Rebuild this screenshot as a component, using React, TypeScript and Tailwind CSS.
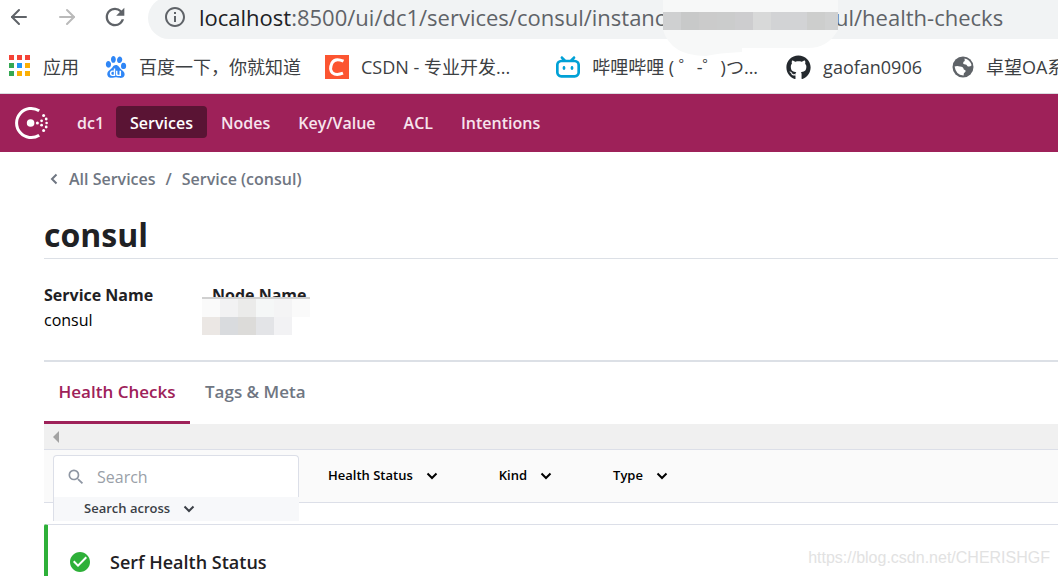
import { ArrowLeft, ArrowRight } from 'lucide-react'
import { FaGithub } from 'react-icons/fa'
import { MdCheckCircle, MdOutlineInfo, MdRefresh, MdSearch } from 'react-icons/md'
import { SiBaidu, SiBilibili } from 'react-icons/si'

const appColors = [
  '#f44336', '#f44336', '#f44336',
  '#34a853', '#2196f3', '#fbb004',
  '#34a853', '#fbb004', '#fbb004',
]

const urlMask = ['#cfd0d1', '#c8c9c9', '#cbcbcb', '#cbcccc', '#cdcdcf', '#d8d9d9', '#d2d3d5', '#d2d3d5', '#cdcecd', '#d0d1d1']

const nodeMask = [
  ['#fafafa', '#f2f2f3', '#ebebea', '#f5f7f7', '#f4f4f5', '#fafafa'],
  ['#ebe7e4', '#d9dbde', '#dcdbd9', '#e3e4e7', '#f2f2f4', '#ffffff'],
]

const navItems = ['Services', 'Nodes', 'Key/Value', 'ACL', 'Intentions']

function Chevron() {
  return (
    <svg viewBox="0 0 12 8" className="w-3 h-2 shrink-0" fill="none" stroke="currentColor" strokeWidth="2">
      <path d="M1.5 1.5 6 6l4.5-4.5" />
    </svg>
  )
}

function ConsulLogo() {
  return (
    <svg viewBox="0 0 34 34" className="w-[34px] h-[34px]" fill="white">
      <path d="M24.2 29.2A14.6 14.6 0 1 1 24.2 4.8" fill="none" stroke="white" strokeWidth="3" />
      <circle cx="15.6" cy="17" r="3.8" />
      <circle cx="22.4" cy="17" r="1.5" />
      <circle cx="26.6" cy="14.8" r="1.4" />
      <circle cx="26.6" cy="19.2" r="1.4" />
      <circle cx="31.2" cy="13" r="1.4" />
      <circle cx="31.6" cy="17" r="1.3" />
      <circle cx="31.2" cy="21" r="1.4" />
      <circle cx="28.6" cy="9.4" r="1.5" />
      <circle cx="28.6" cy="24.6" r="1.5" />
    </svg>
  )
}

function Globe() {
  return (
    <svg viewBox="0 0 22 22" className="w-[22px] h-[22px] mr-3">
      <circle cx="11" cy="11" r="10.5" fill="#5f6368" />
      <path d="M12.5 2.4Q18 3.4 19.6 9.2Q18 11 15.5 10.2Q14.8 8 12 8.2Q10.2 7.4 11.6 5.8Q13.4 5 12.5 2.4Z" fill="white" />
      <path d="M2.6 10.6Q5.2 9.4 8 10.6Q11.4 10.8 11.8 13.4Q14.6 14 13.2 16Q11.4 16.8 11.6 19.4Q4 19.6 2.6 10.6Z" fill="white" />
    </svg>
  )
}

function BrowserBar() {
  return (
    <div className="h-[39px] flex items-end pl-[7px] text-[#5f6368]">
      <div className="h-[42px] pb-0.5 flex items-center shrink-0">
        <button aria-label="Back" className="w-6"><ArrowLeft size={24} /></button>
        <button aria-label="Forward" className="w-6 ml-6 text-[#bababa]"><ArrowRight size={24} /></button>
        <button aria-label="Reload" className="ml-[22px]"><MdRefresh size={28} /></button>
      </div>
      <div className="relative h-[42px] flex-1 ml-[19px] pl-[15px] pb-0.5 flex items-center rounded-l-full bg-[#f1f3f4] text-[22px] whitespace-nowrap">
        <MdOutlineInfo size={24} className="shrink-0 mr-3" />
        <span className="w-[636px] shrink-0">
          <span className="text-[#202124]">localhost</span>:8500/ui/dc1/services/consul/instance
        </span>
        <span>ul/health-checks</span>
        <div className="absolute left-[515px] top-[3px] w-[175px]">
          <svg viewBox="0 0 175 56" className="block w-full">
            <path d="M0 30V0h175v30Q165 48 145 48H79V52Q55 53 43 56Q8 56 0 30Z" fill="#f7f8f8" />
          </svg>
          <div className="absolute top-3 left-0 w-full h-[18px] flex overflow-hidden">
            {urlMask.map((color, i) => (
              <span key={i} className="w-[18px] h-[18px] shrink-0" style={{ backgroundColor: color }} />
            ))}
          </div>
        </div>
      </div>
    </div>
  )
}

function Bookmarks() {
  return (
    <nav className="h-[55px] pt-0.5 flex items-center pl-[9px] border-b border-[#dadce0] text-lg text-[#3c4043] whitespace-nowrap overflow-hidden">
      <a href="#" className="flex items-center shrink-0">
        <span className="grid grid-cols-3 gap-[3px] mr-[13px] pb-1">
          {appColors.map((color, i) => (
            <span key={i} className="w-[5px] h-[5px]" style={{ backgroundColor: color }} />
          ))}
        </span>
        应用
      </a>
      <a href="#" className="flex items-center shrink-0 ml-[26px]">
        <SiBaidu size={22} className="text-[#2f86f6] mr-3" />
        百度一下，你就知道
      </a>
      <a href="#" className="flex items-center shrink-0 ml-6">
        <svg viewBox="0 0 24 24" className="w-6 h-6 mr-3">
          <path d="M0 0h24v24H0z" fill="#fc5531" />
          <path d="M18.5 6.2Q10 2.4 7 8Q4 14.5 7.5 17.8Q11 20.8 18 18.2" fill="none" stroke="white" strokeWidth="3" />
        </svg>
        CSDN - 专业开发...
      </a>
      <a href="#" className="flex items-center shrink-0 ml-[46px]">
        <SiBilibili size={24} className="text-[#00a1d6] mr-3" />
        哔哩哔哩 ( ゜-゜)つ...
      </a>
      <a href="#" className="flex items-center shrink-0 ml-7">
        <FaGithub size={25} className="text-[#24292e] mr-3" />
        gaofan0906
      </a>
      <a href="#" className="flex items-center shrink-0 ml-[30px]">
        <Globe />
        卓望OA系
      </a>
    </nav>
  )
}

function Mosaic() {
  return (
    <div className="absolute left-0 top-[14px] w-[108px] border-t-2 border-[#d0d0d0] bg-white">
      {nodeMask.map((row, r) => (
        <div key={r} className="flex">
          {row.map((color, i) => (
            <span key={i} className="w-[18px] h-[18px]" style={{ backgroundColor: color }} />
          ))}
        </div>
      ))}
    </div>
  )
}

function Filter({ label }: { label: string }) {
  return (
    <button className="flex items-center gap-[13px]">
      {label}
      <Chevron />
    </button>
  )
}

export default function App() {
  return (
    <div className="h-screen overflow-hidden relative bg-white text-black font-['Open_Sans','Noto_Sans_CJK_SC',sans-serif]">
      <BrowserBar />
      <Bookmarks />

      <header className="h-[58px] flex items-center pl-[15px] bg-[#9e2159] text-base font-semibold text-[#f7e4ed]">
        <ConsulLogo />
        <button className="ml-7">dc1</button>
        <nav className="flex items-center ml-3 pb-0.5">
          {navItems.map((item) => (
            <a
              key={item}
              href="#"
              className={
                item === 'Services'
                  ? 'h-8 px-[14px] pt-0.5 flex items-center rounded bg-[#5a1434] text-white'
                  : 'h-8 px-[14px] pt-0.5 flex items-center'
              }
            >
              {item}
            </a>
          ))}
        </nav>
      </header>

      <main className="pl-11">
        <nav className="h-[54px] flex items-center pl-1.5 text-base font-semibold text-[#6f7682]">
          <svg viewBox="0 0 8 12" className="w-2 h-3 mr-[11px]" fill="none" stroke="currentColor" strokeWidth="2">
            <path d="M6.5 1.5 2 6l4.5 4.5" />
          </svg>
          <a href="#">All Services</a>
          <span className="mx-2.5">/</span>
          <a href="#">Service (consul)</a>
        </nav>

        <h1 className="h-[53px] pt-1.5 border-b border-[#dce0e6] text-[32px] leading-[46px] font-bold text-[#1f2124]">consul</h1>

        <dl className="h-[103px] pt-6 flex border-b-2 border-[#dce0e6] text-base leading-[25px]">
          <div className="w-[158px]">
            <dt className="font-bold text-[#1f2124]">Service Name</dt>
            <dd>consul</dd>
          </div>
          <div className="relative">
            <dt className="pl-2.5 font-bold text-[#1f2124]">Node Name</dt>
            <dd><Mosaic /></dd>
          </div>
        </dl>

        <div role="tablist" className="h-[62px] flex text-[17px] font-semibold">
          <button role="tab" aria-selected="true" className="w-[146px] border-b-3 border-[#9e2159] text-[#9e2159]">Health Checks</button>
          <button role="tab" aria-selected="false" className="px-[15px] border-b-3 border-transparent text-[#6f7682]">Tags & Meta</button>
        </div>

        <div className="h-[25px] pl-[9px] flex items-center bg-[#f0f0f0]">
          <svg viewBox="0 0 6 12" className="w-1.5 h-3" fill="#a3a3a3">
            <path d="M6 0v12L0 6z" />
          </svg>
        </div>

        <div className="h-[54px] pl-[9px] pt-[5px] flex items-start border-y border-[#dcdfe8] bg-[#fafafa] text-[13px] font-semibold">
          <div className="w-[246px] shrink-0">
            <label className="h-[42px] flex items-center pl-3 border border-b-0 border-[#dcdfe8] rounded-t-sm bg-white">
              <MdSearch size={20} className="text-[#8e96a3] shrink-0" />
              <input
                type="text"
                aria-label="Search"
                placeholder="Search"
                className="ml-[11px] w-40 text-base font-normal outline-none placeholder:text-[#9a9fa8]"
              />
            </label>
            <button className="w-full h-6 pl-[30px] flex items-center gap-[13px] border-l border-[#dcdfe8] bg-[#f7f8fa] text-[#3b3f46]">
              Search across
              <Chevron />
            </button>
          </div>
          <div className="h-[42px] ml-[29px] flex items-center gap-[61px]">
            <Filter label="Health Status" />
            <Filter label="Kind" />
            <Filter label="Type" />
          </div>
        </div>

        <div className="mt-[21px] h-[74px] pl-5 flex items-center gap-[18px] border-t border-t-[#dcdfe8] border-l-4 border-l-[#2eb039] rounded-tl-xs">
          <MdCheckCircle size={24} className="text-[#2eb039]" />
          <h2 className="text-lg font-semibold text-[#1f2124]">Serf Health Status</h2>
        </div>
      </main>

      <p className="absolute right-2 bottom-1.5 text-base text-[#e2e2e2] font-['Liberation_Sans',sans-serif]">
        https://blog.csdn.net/CHERISHGF
      </p>
    </div>
  )
}
